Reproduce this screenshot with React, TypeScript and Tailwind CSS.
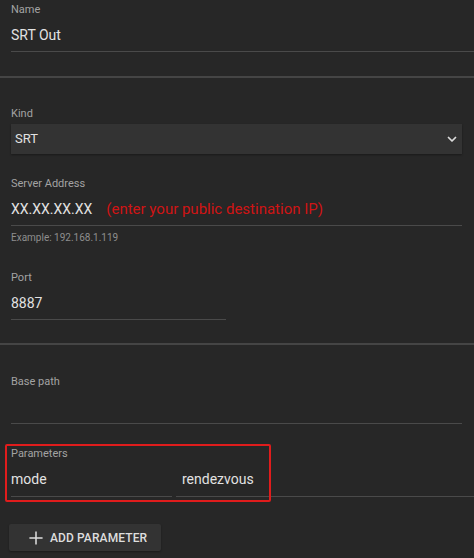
import React from "react";

function Label({ children }: { children: React.ReactNode }) {
  return (
    <div className="text-[11px] leading-[14px] text-[#a3a3a3]">{children}</div>
  );
}

function ChevronDownIcon() {
  return (
    <svg
      width="12"
      height="12"
      viewBox="0 0 24 24"
      fill="none"
      stroke="currentColor"
      strokeWidth="3.5"
      strokeLinecap="round"
      strokeLinejoin="round"
    >
      <polyline points="5 9 12 16 19 9" />
    </svg>
  );
}

function PlusIcon() {
  return (
    <svg
      width="14"
      height="14"
      viewBox="0 0 24 24"
      fill="none"
      stroke="currentColor"
      strokeWidth="2.6"
      strokeLinecap="square"
    >
      <path d="M12 2v20M2 12h20" />
    </svg>
  );
}

export default function App() {
  return (
    <div
      className="w-[474px] h-[558px] overflow-hidden bg-[#272727] text-[#e2e2e2] relative"
      style={{ fontFamily: "Roboto, 'Liberation Sans', sans-serif" }}
    >
      {/* ── Name ── */}
      <div className="pl-[11px] pt-[3px]">
        <Label>Name</Label>
        <div className="mt-[8px] text-[14px] leading-[20px]">SRT Out</div>
        <div className="mt-[6px] h-px bg-[#4a4a4a]" />
      </div>

      <div className="mt-[24px] h-[2px] bg-[#454545]" />

      {/* ── Kind / Address / Port ── */}
      <div className="pl-[11px] pr-[12px]">
        <div className="mt-[29px]">
          <Label>Kind</Label>
        </div>
        <div className="mt-[3px] h-[30px] bg-[#333333] flex items-center justify-between pl-[4px] pr-[4px] text-[13px] shadow-[0_1px_2px_rgba(0,0,0,0.35)]">
          <span>SRT</span>
          <span className="text-[#dcdcdc]">
            <ChevronDownIcon />
          </span>
        </div>

        <div className="mt-[23px]">
          <Label>Server Address</Label>
        </div>
        <div className="mt-[8px] text-[14px] leading-[20px] flex items-center">
          <span>XX.XX.XX.XX</span>
          <span className="ml-[14px] text-[15px] text-[#d01414]">
            (enter your public destination IP)
          </span>
        </div>
        <div className="mt-[6px] h-px bg-[#4a4a4a]" />
        <div className="mt-[5px] text-[10px] leading-[13px] text-[#8e8e8e]">
          Example: 192.168.1.119
        </div>

        <div className="mt-[27px]">
          <Label>Port</Label>
        </div>
        <div className="mt-[8px] text-[14px] leading-[20px]">8887</div>
        <div className="mt-[6px] h-px w-[215px] bg-[#4a4a4a]" />
      </div>

      <div className="mt-[23px] h-[2px] bg-[#454545]" />

      {/* ── Base path / Parameters ── */}
      <div className="pl-[11px]">
        <div className="mt-[30px]">
          <Label>Base path</Label>
        </div>
        <div className="mt-[8px] h-[20px]" />
        <div className="mt-[6px] h-px w-[451px] bg-[#4a4a4a]" />

        <div className="mt-[23px]">
          <Label>Parameters</Label>
        </div>
        <div className="mt-[8px] flex text-[14px] leading-[20px]">
          <div className="w-[161px]">
            <div>mode</div>
            <div className="mt-[7px] h-px bg-[#4a4a4a]" />
          </div>
          <div className="flex-1 pl-[6px] ml-[4px]">
            <div>rendezvous</div>
            <div className="mt-[7px] h-px bg-[#4a4a4a] -ml-[6px]" />
          </div>
        </div>
      </div>

      <button className="mt-[27px] ml-[9px] w-[152px] h-[27px] bg-[#333333] rounded-[2px] flex items-center gap-[7px] pl-[20px] text-[12px] font-medium text-[#dedede] tracking-[0.1px] shadow-[0_1px_2px_rgba(0,0,0,0.35)]">
        <PlusIcon />
        <span>ADD PARAMETER</span>
      </button>

      {/* highlight box drawn over the Parameters row */}
      <div className="absolute left-[5px] top-[444px] w-[266px] h-[58px] border-2 border-[#e01c1c] rounded-[2px] pointer-events-none" />
    </div>
  );
}
